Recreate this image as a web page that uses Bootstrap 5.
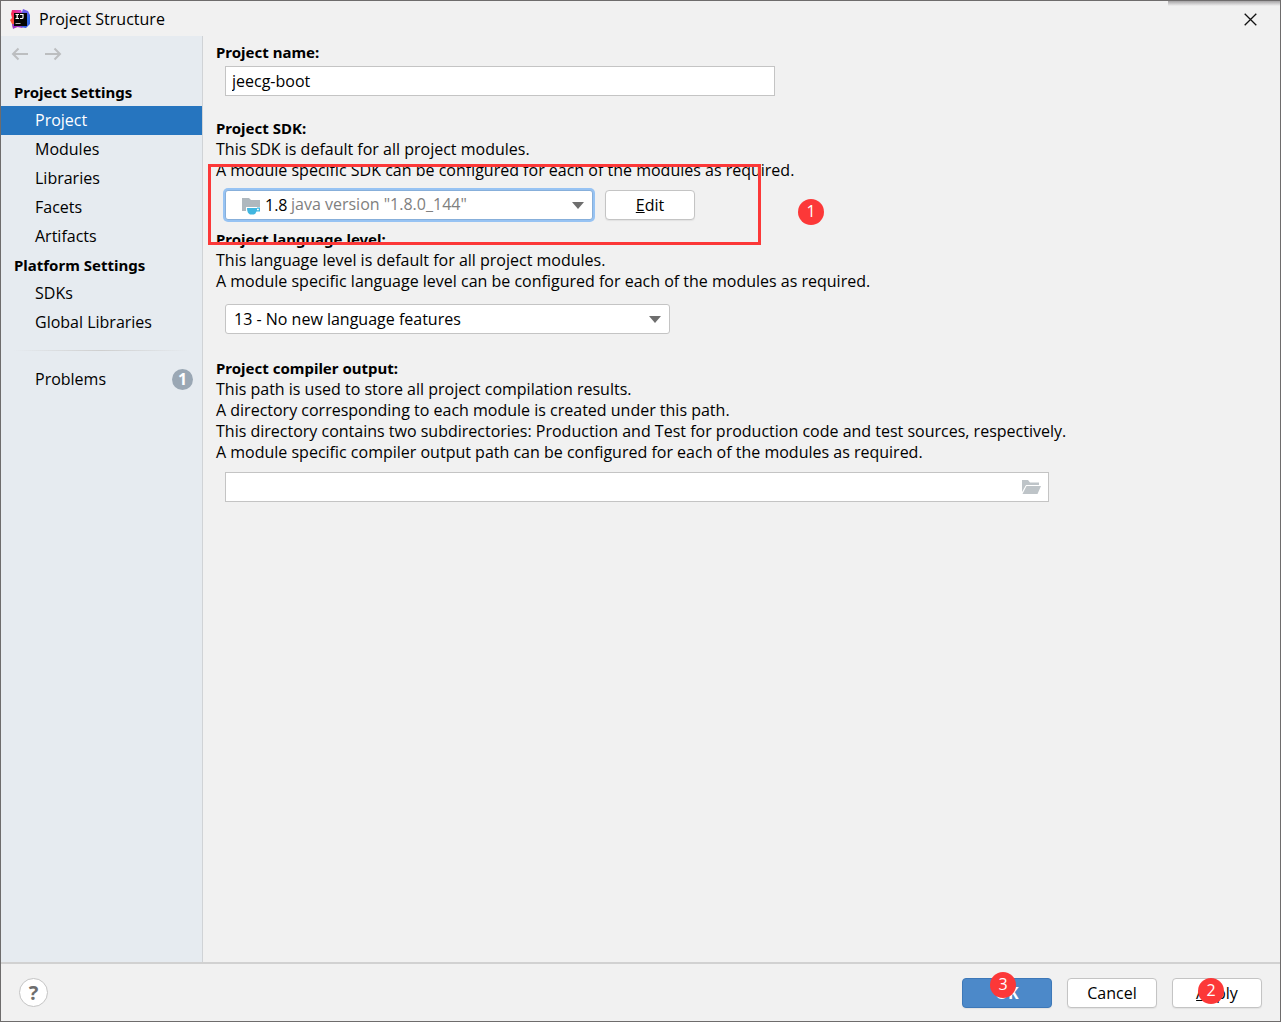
<!DOCTYPE html>
<html lang="en">
<head>
<meta charset="utf-8">
<meta name="viewport" content="width=device-width, initial-scale=1">
<title>Project Structure</title>
<link rel="stylesheet" href="https://cdn.jsdelivr.net/npm/bootstrap@5.3.0/dist/css/bootstrap.min.css">
<style>
  body { font: 16px/21px "Open Sans", "Noto Sans", sans-serif; color: #000; background: #f1f1f1; }
  .dialog { border: 1px solid #6e6c6c; background: #f1f1f1; }
  .top-shade { top: 0; right: 0; width: 112px; height: 5px; background: linear-gradient(#a5a3a5, #f1f1f1); }
  .titlebar { height: 35px; padding: 1px 23px 0 9px; }
  .titlebar button, .history button { line-height: 0; }
  .sidebar { width: 202px; background: #e6ebf0; border-right: 1px solid #d0d3d6; }
  .history { height: 34px; gap: 15px; padding: 2px 0 0 10px; }
  .side-head { font: 700 15px/28px "Noto Sans", sans-serif; height: 28px; padding-left: 13px; }
  .side-link { display: flex; align-items: center; justify-content: space-between; height: 29px; padding: 0 9px 0 34px; color: #000; text-decoration: none; }
  .side-link.active { background: #2675bf; color: #fff; }
  .side-rule { height: 28px; padding: 13px 12px; }
  .side-rule hr { margin: 0; border: 0; height: 1px; opacity: 1; background: linear-gradient(90deg, transparent, #cfcfcf 50%, transparent); }
  .count { width: 21px; height: 21px; line-height: 21px; border-radius: 50%; background: #9aa7b4; color: #fff; font-weight: 700; text-align: center; }
  .content { padding: 6px 13px; }
  .content label { display: block; font: 700 15px/21px "Noto Sans", sans-serif; }
  .content p { margin: 0; }
  .group-gap { margin-top: 22px; }
  .group-gap-sm { margin-top: 9px; }
  .group-gap-lg { margin-top: 24px; }
  .field-row { padding: 9px 0 0 9px; }
  .field-row.tight { padding-top: 3px; }
  .field { display: block; height: 30px; width: 100%; border: 1px solid #c4c4c4; border-radius: 0; background: #fff; color: #000; padding: 0 6px 1px; outline: 0; }
  .picker { appearance: none; border-radius: 3px; padding: 0 30px 0 8px; background: #fff url("data:image/svg+xml,%3Csvg xmlns='http://www.w3.org/2000/svg' width='12' height='7'%3E%3Cpath d='M0 0h12L6 7z' fill='%236e6e6e'/%3E%3C/svg%3E") no-repeat right 8px center; }
  .w-name { max-width: 550px; }
  .w-level { max-width: 445px; }
  .w-output { max-width: 824px; }
  .w-sdk { width: 368px; }
  .w-sdk .picker { padding-left: 39px; border-color: #87afda; box-shadow: 0 0 0 2px #97c3f3; }
  .sdk-icon { left: 16px; top: 6px; }
  .sdk-version { left: 66px; top: 4px; color: #808080; pointer-events: none; }
  .open-folder { right: 8px; top: 8px; line-height: 0; }
  .push { height: 30px; width: 90px; padding: 0; border: 1px solid #c4c4c4; border-radius: 4px; background: #fff; color: #000; line-height: 28px; box-shadow: 0 1px 1px #e2e2e2; }
  .push.main { background: #4c89c9; border-color: #3d78b8; color: #fff; font-weight: 700; }
  .sdk-line { gap: 12px; }
  .action-set { gap: 15px; }
  .footer-bar { height: 59px; border-top: 2px solid #d1d1d1; padding: 0 18px; }
  .help { width: 29px; height: 29px; border: 1px solid #c4c4c4; border-radius: 50%; background: #fff; color: #6e6e6e; font: 700 20px/27px "Noto Sans", sans-serif; padding: 0; }
  .pin { width: 26px; height: 26px; line-height: 25px; border-radius: 50%; background: #fc3838; color: #fff; text-align: center; pointer-events: none; }
  .pin-one { left: 582px; top: 81px; }
  .pin-two { left: 26px; top: 0; }
  .pin-three { left: 28px; top: -6px; }
  .marker { left: -8px; top: 46px; width: 553px; height: 81px; border: 3px solid #fc3838; pointer-events: none; }
</style>
<script src="https://cdn.jsdelivr.net/npm/bootstrap@5.3.0/dist/js/bootstrap.bundle.min.js"></script>
</head>
<body>
<div class="dialog d-flex flex-column vh-100 position-relative">
  <div class="top-shade position-absolute"></div>
  <header class="titlebar d-flex align-items-center justify-content-between">
    <div class="d-flex align-items-center gap-2">
      <svg width="21" height="21" viewBox="0 0 21 21" aria-hidden="true">
        <defs>
          <linearGradient id="warm" x1="0" y1="1" x2="1" y2="0"><stop offset="0" stop-color="#fc801d"/><stop offset=".5" stop-color="#fe2857"/><stop offset="1" stop-color="#b74af7"/></linearGradient>
          <linearGradient id="cool" x1="0" y1="0" x2="0" y2="1"><stop offset="0" stop-color="#7a56e8"/><stop offset=".5" stop-color="#2f6de8"/><stop offset="1" stop-color="#3a5be0"/></linearGradient>
        </defs>
        <path d="M2 1h9l2 5-5 12-5 1-1-4-2-4 2-2-1-4z" fill="url(#warm)"/>
        <path d="M13 0l5 2 2 4v9l-4 4-6-1 1-12z" fill="url(#cool)"/>
        <path d="M2 15h7l4 4-6-1-4 2z" fill="#9b35c8"/>
        <rect x="4" y="4" width="13" height="13" fill="#050505"/>
        <path d="M5.500 5.500h3.500M5.500 9.500h3.500M7.200 5.500v4M10 5.500h3v3q0 1-1 1h-2" fill="none" stroke="#fff" stroke-width="1.200"/>
        <path d="M5.500 14.500h5" stroke="#bbb"/>
      </svg>
      <span>Project Structure</span>
    </div>
    <button class="btn p-0 border-0" aria-label="Close"><svg width="13" height="13" viewBox="0 0 13 13"><path d="M.7.700l11.600 11.600M12.300.700L.7 12.300" stroke="#111" stroke-width="1.300"/></svg></button>
  </header>

  <div class="d-flex flex-grow-1">
    <nav class="sidebar flex-shrink-0" aria-label="Settings">
      <div class="history d-flex align-items-center">
        <button class="btn p-0 border-0" aria-label="Back"><svg width="18" height="14" viewBox="0 0 18 14" fill="none" stroke="#bcbec0" stroke-width="2"><path d="M17 7H2M7.500 1.500L2 7l5.500 5.500"/></svg></button>
        <button class="btn p-0 border-0" aria-label="Forward"><svg width="18" height="14" viewBox="0 0 18 14" fill="none" stroke="#bcbec0" stroke-width="2"><path d="M1 7h15M10.500 1.500L16 7l-5.500 5.500"/></svg></button>
      </div>
      <div class="side-head mt-2">Project Settings</div>
      <a class="side-link active" href="#">Project</a>
      <a class="side-link" href="#">Modules</a>
      <a class="side-link" href="#">Libraries</a>
      <a class="side-link" href="#">Facets</a>
      <a class="side-link" href="#">Artifacts</a>
      <div class="side-head">Platform Settings</div>
      <a class="side-link" href="#">SDKs</a>
      <a class="side-link" href="#">Global Libraries</a>
      <div class="side-rule"><hr></div>
      <a class="side-link" href="#">Problems <span class="count">1</span></a>
    </nav>

    <main class="content flex-grow-1">
      <section>
        <label for="name">Project name:</label>
        <div class="field-row tight"><input id="name" class="field w-name" type="text" value="jeecg-boot"></div>
      </section>

      <section class="group-gap position-relative">
        <label for="sdk">Project SDK:</label>
        <p>This SDK is default for all project modules.</p>
        <p>A module specific SDK can be configured for each of the modules as required.</p>
        <div class="field-row sdk-line d-flex">
          <div class="w-sdk position-relative">
            <select id="sdk" class="field picker"><option>1.8</option></select>
            <svg class="sdk-icon position-absolute" width="20" height="20" viewBox="0 0 20 20" aria-hidden="true"><path d="M1 2h7l2 2h9v7H5v4H1z" fill="#afb8be"/><path d="M6 12h10v-.5h3v4h-3.500Q14.500 18 13 18.500H9Q6 17 6 12zM16 12.700v1.600h1.800v-1.600z" fill="#40b6e0" fill-rule="evenodd"/></svg>
            <span class="sdk-version position-absolute">java version "1.8.0_144"</span>
          </div>
          <button class="btn push"><u>E</u>dit</button>
        </div>
        <div class="marker position-absolute"></div>
        <span class="pin pin-one position-absolute">1</span>
      </section>

      <section class="group-gap-sm">
        <label for="level">Project language level:</label>
        <p>This language level is default for all project modules.</p>
        <p>A module specific language level can be configured for each of the modules as required.</p>
        <div class="field-row pt-2 mt-1"><select id="level" class="field picker w-level"><option>13 - No new language features</option></select></div>
      </section>

      <section class="group-gap-lg">
        <label for="output">Project compiler output:</label>
        <p>This path is used to store all project compilation results.</p>
        <p>A directory corresponding to each module is created under this path.</p>
        <p>This directory contains two subdirectories: Production and Test for production code and test sources, respectively.</p>
        <p>A module specific compiler output path can be configured for each of the modules as required.</p>
        <div class="field-row"><div class="w-output position-relative">
          <input id="output" class="field" type="text">
          <button class="btn p-0 border-0 open-folder position-absolute" aria-label="Browse"><svg width="19" height="14" viewBox="0 0 19 14" fill="#bec4c8"><path d="M0 0h6l2 2.500h9V5H4L0 12z"/><path d="M4.500 6H19l-3.500 8H.5z"/></svg></button>
        </div></div>
      </section>
    </main>
  </div>

  <footer class="footer-bar d-flex align-items-center justify-content-between">
    <button class="help" aria-label="Help">?</button>
    <div class="action-set d-flex">
      <div class="position-relative"><button class="btn push main">OK</button><span class="pin pin-three position-absolute">3</span></div>
      <button class="btn push">Cancel</button>
      <div class="position-relative"><button class="btn push"><u>A</u>pply</button><span class="pin pin-two position-absolute">2</span></div>
    </div>
  </footer>
</div>
</body>
</html>
